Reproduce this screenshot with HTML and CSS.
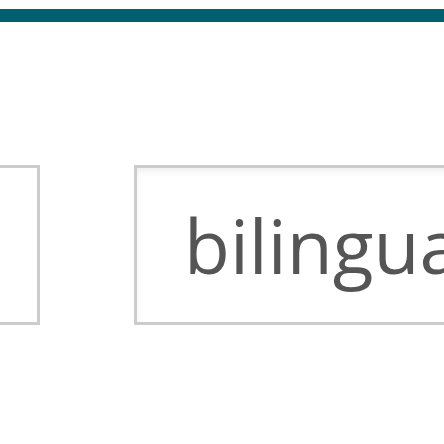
FILE: index.html
```html
<!DOCTYPE html>
<html lang="en">
<head>
<meta charset="utf-8">
<title>Field</title>
<link rel="stylesheet" href="styles.css">
</head>
<body>
<div class="topbar"></div>
<div class="row">
  <div class="field field-prev"></div>
  <div class="field field-main"><span class="value">bilingual</span></div>
</div>
</body>
</html>
```
FILE: styles.css
```css
html, body {
  margin: 0;
  padding: 0;
  background: #ffffff;
  overflow: hidden;
}
body {
  width: 444px;
  height: 444px;
  font-family: "Open Sans", "Noto Sans", sans-serif;
}
.topbar {
  margin-top: 9px;
  height: 13px;
  background: #00606e;
}
.row {
  display: flex;
  gap: 94px;
  margin-top: 143px;
}
.field {
  flex-shrink: 0;
  box-sizing: border-box;
  height: 160px;
  border: 3px solid #cccccc;
  background: #ffffff;
}
.field-prev {
  width: 200px;
  margin-left: -160px;
}
.field-main {
  width: 600px;
  padding-left: 47px;
  display: flex;
  align-items: center;
  box-shadow: inset 0 3px 6px rgba(0, 0, 0, 0.07);
}
.value {
  font-size: 75px;
  line-height: 102px;
  color: #555555;
  white-space: nowrap;
}
```
